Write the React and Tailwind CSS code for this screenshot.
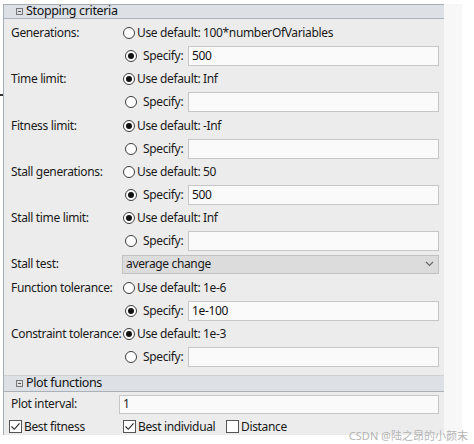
import React from "react";

function Radio({ on }) {
  return (
    <span className="w-[12px] h-[12px] shrink-0 rounded-full border border-[#3c3c3c] bg-white flex items-center justify-center">
      {on && <span className="w-[6px] h-[6px] rounded-full bg-[#111]" />}
    </span>
  );
}

function Check({ on }) {
  return (
    <span className="w-[13px] h-[13px] shrink-0 border border-[#555] bg-white flex items-center justify-center">
      {on && (
        <svg width="11" height="11" viewBox="0 0 11 11">
          <path d="M1.5 5.5 L4.3 8.3 L9.5 2.3" fill="none" stroke="#222" strokeWidth="1.1" />
        </svg>
      )}
    </span>
  );
}

function Box({ value }) {
  return (
    <div className="flex-1 h-[20px] border border-[#c6c6c6] bg-[#fafafa] px-[3px] flex items-center text-[#111]">
      {value}
    </div>
  );
}

function DefaultRow({ label, text, on }) {
  return (
    <div className="h-[23.15px] flex items-center whitespace-nowrap">
      <div className="w-[112px] shrink-0">{label}</div>
      <Radio on={on} />
      <span className="ml-[2px]">{text}</span>
    </div>
  );
}

function SpecifyRow({ value, on }) {
  return (
    <div className="h-[23.15px] flex items-center pr-[5px] whitespace-nowrap">
      <div className="w-[114px] shrink-0" />
      <Radio on={on} />
      <span className="ml-[6px] w-[45px] shrink-0">Specify:</span>
      <Box value={value} />
    </div>
  );
}

function Header({ title }) {
  return (
    <div className="h-[16px] flex items-center bg-[#dde1e5] border-b border-[#aab1b8] pl-[12px]">
      <span className="w-[7px] h-[7px] border border-[#777] flex items-center justify-center mr-[3px]">
        <span className="w-[3px] h-px bg-[#555]" />
      </span>
      <span className="text-[#111] text-[12.5px]">{title}</span>
    </div>
  );
}

export default function App() {
  return (
    <div className="w-[474px] h-[444px] bg-white relative flex text-[12px] tracking-[-0.35px] leading-none text-[#1a1a1a] font-['Noto_Sans',sans-serif]">
      <span className="absolute left-0 top-[94px] w-[3px] h-[2px] bg-[#333]" />
      <div className="ml-[3px] mt-[4px] w-[441px] h-[431px] bg-[#ececec] border-l border-t border-[#a6adb4] flex flex-col">
        <Header title="Stopping criteria" />
        <div className="pl-[7px] pt-[3px]">
          <DefaultRow label="Generations:" text="Use default: 100*numberOfVariables" />
          <SpecifyRow value="500" on />
          <DefaultRow label="Time limit:" text="Use default: Inf" on />
          <SpecifyRow value="" />
          <DefaultRow label="Fitness limit:" text="Use default: -Inf" on />
          <SpecifyRow value="" />
          <DefaultRow label="Stall generations:" text="Use default: 50" />
          <SpecifyRow value="500" on />
          <DefaultRow label="Stall time limit:" text="Use default: Inf" on />
          <SpecifyRow value="" />
          <div className="h-[23.15px] flex items-center pr-[5px] whitespace-nowrap">
            <div className="w-[111px] shrink-0">Stall test:</div>
            <div className="flex-1 h-[19px] border border-[#c2c2c2] bg-[#dcdcdc] flex items-center justify-between pl-[3px] pr-[4px]">
              <span>average change</span>
              <svg width="9" height="6" viewBox="0 0 9 6">
                <path d="M1 1 L4.5 4.5 L8 1" fill="none" stroke="#666" strokeWidth="1.2" />
              </svg>
            </div>
          </div>
          <DefaultRow label="Function tolerance:" text="Use default: 1e-6" />
          <SpecifyRow value="1e-100" on />
          <DefaultRow label="Constraint tolerance:" text="Use default: 1e-3" on />
          <SpecifyRow value="" />
        </div>
        <div className="mt-[6px] border-t border-[#d0d0d0]">
          <Header title="Plot functions" />
        </div>
        <div className="pl-[7px] pr-[5px] pt-[1px]">
          <div className="h-[23px] flex items-center">
            <div className="w-[108px] shrink-0">Plot interval:</div>
            <div className="flex-1 h-[19px] border border-[#c6c6c6] bg-[#fafafa] px-[3px] flex items-center">1</div>
          </div>
          <div className="h-[22px] flex items-center -ml-[2px] whitespace-nowrap">
            <Check on />
            <span className="ml-[2px] w-[99px]">Best fitness</span>
            <Check on />
            <span className="ml-[2px] w-[88px]">Best individual</span>
            <Check />
            <span className="ml-[2px]">Distance</span>
          </div>
        </div>
      </div>
      <div className="mt-[4px] w-[18px] h-[431px] bg-[#f7f7f7]" />
      <span className="absolute right-[6px] bottom-[3px] text-[11px] tracking-normal text-[#b4b4b4] font-['Noto_Sans','Noto_Sans_CJK_SC',sans-serif]">
        CSDN @陆之昂的小颜末
      </span>
    </div>
  );
}
